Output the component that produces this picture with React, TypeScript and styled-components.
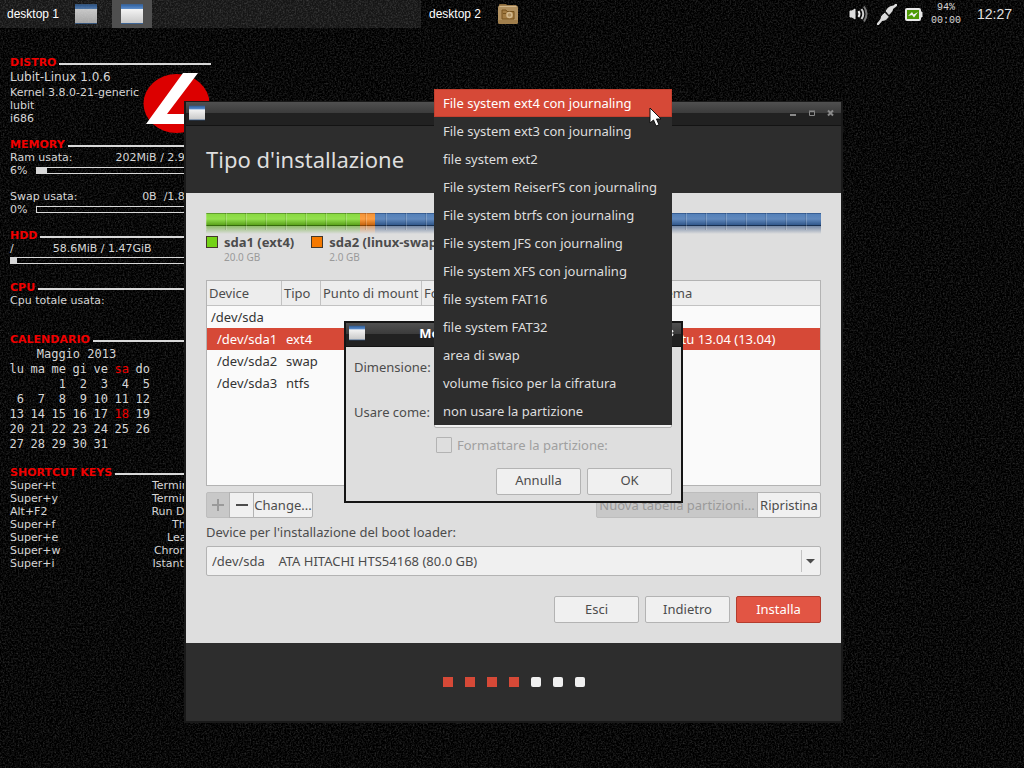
import React from "react";
import styled, { createGlobalStyle, css } from "styled-components";

const ui = `"Noto Sans", "Open Sans", sans-serif`;
const conky = `"DejaVu Sans", sans-serif`;

const GlobalStyle = createGlobalStyle`
  *, *::before, *::after { box-sizing: border-box; }
  body { margin: 0; background: #050505; overflow: hidden; }
  button, input, select { font: inherit; margin: 0; }
`;

/* ---------- desktop ---------- */

const Desktop = styled.main`
  position: relative;
  min-height: 100vh;
  overflow: hidden;
  font: 13px/18px ${ui};
  color: #4c4c4c;
`;

const NoiseLayer = styled.svg`
  position: absolute;
  inset: 0;
  width: 100%;
  height: 100%;
`;

/* ---------- top panel ---------- */

const Panel = styled.header`
  position: relative;
  display: flex;
  height: 28px;
  font: 12px/28px "Liberation Sans", sans-serif;
  color: #fff;
`;

const Pager = styled.nav<{ $current?: boolean }>`
  display: flex;
  flex: 0 1 421px;
  padding-left: ${(p) => (p.$current ? 7 : 8)}px;
  background: ${(p) => (p.$current ? "rgba(255, 255, 255, 0.085)" : "none")};
`;

const PagerName = styled.span`
  flex: none;
  width: 59px;
`;

const TaskButton = styled.button<{ $active?: boolean }>`
  display: grid;
  place-items: center;
  width: 40px;
  height: 28px;
  margin-right: 6px;
  padding: 0;
  border: 0;
  background: ${(p) => (p.$active ? "#4f4f4f" : "none")};
`;

const Tray = styled.div`
  display: flex;
  align-items: center;
  gap: 8px;
  margin-left: auto;
  padding-right: 12px;
`;

const BatteryText = styled.div`
  font: 10px/13px "Liberation Mono", monospace;
  color: #d8d8d8;
  text-align: center;
`;

const Clock = styled.time`
  margin-left: 8px;
  font-size: 14px;
  color: #e2e2e2;
`;

/* ---------- system monitor ---------- */

const Monitor = styled.aside`
  position: relative;
  display: flex;
  flex-direction: column;
  width: 201px;
  margin: 28px 0 0 10px;
  font: 11px/13px ${conky};
  color: #d6d6d6;
`;

const MonitorSection = styled.section<{ $after?: number }>`
  position: relative;
  margin-bottom: ${(p) => p.$after ?? 13}px;
`;

const MonitorTitle = styled.h2`
  display: flex;
  align-items: center;
  gap: 3px;
  margin: 0;
  font: bold 11px/13px ${conky};
  color: #f00000;
  white-space: nowrap;

  &::after {
    content: "";
    flex: 1;
    height: 2px;
    margin-top: 2px;
    background: #d8d8d8;
  }
`;

const MonitorLine = styled.div<{ $large?: boolean }>`
  display: flex;
  justify-content: space-between;
  min-height: 13px;
  white-space: pre;
  ${(p) =>
    p.$large &&
    css`
      font-size: 12px;
      line-height: 17px;
    `}
`;

const Meter = styled.div<{ $wide?: boolean }>`
  width: ${(p) => (p.$wide ? "100%" : "175px")};
  height: 7px;
  margin-top: ${(p) => (p.$wide ? 2 : 3)}px;
  border: 1px solid #d8d8d8;
`;

const MeterFill = styled.div`
  height: 100%;
  background: #d8d8d8;
`;

const HddUsage = styled.span`
  flex: 1;
  padding-left: 39px;
`;

const Logo = styled.svg`
  position: absolute;
  left: 133px;
  top: 17px;
  width: 67px;
  height: 60px;
`;

const Calendar = styled.table`
  margin-top: 1px;
  border-collapse: collapse;
  font: 12px/15px "DejaVu Sans Mono", monospace;

  caption {
    width: 133px;
    height: 15px;
    text-align: center;
  }
  th,
  td {
    width: 21px;
    height: 15px;
    padding: 0 7px 0 0;
    font-weight: normal;
  }
`;

const CalendarCell = styled.span<{ $today?: boolean }>`
  display: flex;
  justify-content: flex-end;
  width: 14px;
  color: ${(p) => (p.$today ? "#f00000" : "inherit")};
`;

/* ---------- windows ---------- */

const InstallerWindow = styled.section`
  position: absolute;
  left: 184px;
  right: 181px;
  top: 101px;
  border: 2px solid #191919;
  border-top-width: 1px;
  background: #dedede;
`;

const TitleBar = styled.div`
  display: flex;
  align-items: center;
  height: 24px;
  padding: 0 5px 2px 3px;
  border-bottom: 1px solid #131313;
  background: linear-gradient(#505050, #3b3b3b 11px, #212121 11px, #212121);
`;

const DialogTitle = styled.h2`
  flex: 1;
  margin: 0;
  font: bold 13px/20px ${ui};
  color: #fff;
  text-align: center;
`;

const WindowControls = styled.div<{ $bright?: boolean }>`
  display: flex;
  gap: 8px;
  margin-left: auto;
  color: ${(p) => (p.$bright ? "#f4f4f4" : "#8a8a8a")};
`;

const WindowControl = styled.button`
  display: grid;
  width: 11px;
  height: 10px;
  padding: 0;
  border: 0;
  background: none;
  color: inherit;
`;

const WindowHeader = styled.header`
  display: flex;
  align-items: center;
  height: 67px;
  padding: 0 20px 2px;
  background: #2d2d2d;
`;

const WindowTitle = styled.h1`
  margin: 0;
  font: 22px/32px ${ui};
  color: #dedede;
`;

const WindowBody = styled.div`
  padding: 20px;
`;

const WindowFooter = styled.footer`
  display: flex;
  align-items: center;
  justify-content: center;
  gap: 12px;
  height: 78px;
  background: #2d2d2d;
`;

const StepDot = styled.span<{ $done?: boolean }>`
  width: 10px;
  height: 10px;
  border-radius: ${(p) => (p.$done ? 0 : 2)}px;
  background: ${(p) => (p.$done ? "#d64937" : "#f0f0f0")};
`;

/* ---------- partition chart ---------- */

const DiskBar = styled.div`
  display: flex;
  height: 23px;
  position: relative;

  &::after {
    content: "";
    position: absolute;
    inset: 0;
    background: linear-gradient(
        90deg,
        rgba(255, 255, 255, 0.2) 0 1px,
        transparent 1px 19px,
        rgba(0, 0, 0, 0.1) 19px 20px
      )
      0 0 / 20px 17px repeat-x;
  }
`;

type Hue = "green" | "orange" | "blue";

const barFill: Record<Hue, string> = {
  green:
    "linear-gradient(#5f9e2c 0 1px, #89d941 1px, #93e04e 6px, #5ba31b 12px, #356b0b 12px 13px, rgba(100,170,45,.65) 13px, rgba(222,222,222,0) 21px)",
  orange:
    "linear-gradient(#c4712a 0 1px, #f59436 1px, #fd9e42 6px, #c8640f 12px, #874407 12px 13px, rgba(215,125,50,.65) 13px, rgba(222,222,222,0) 21px)",
  blue:
    "linear-gradient(#385f94 0 1px, #5480b8 1px, #6189bd 6px, #31588c 12px, #172f50 12px 13px, rgba(60,90,135,.65) 13px, rgba(222,222,222,0) 21px)",
};

const swatchFill: Record<Hue, string> = {
  green: "#73d216",
  orange: "#f57900",
  blue: "#3465a4",
};

const BarSegment = styled.div<{ $hue: Hue; $share: number }>`
  flex: ${(p) => p.$share} 1 0;
  background: ${(p) => barFill[p.$hue]};
`;

const Legend = styled.ul`
  display: flex;
  gap: 17px;
  height: 44px;
  margin: 0;
  padding: 0;
  list-style: none;
`;

const LegendItem = styled.li`
  display: grid;
  grid-template-columns: 12px auto;
  grid-template-rows: 15px 12px;
  column-gap: 6px;
  align-content: start;
  white-space: nowrap;
`;

const Swatch = styled.span<{ $hue: Hue }>`
  width: 12px;
  height: 12px;
  border: 1px solid #43382b;
  background: ${(p) => swatchFill[p.$hue]};
`;

const LegendName = styled.strong`
  font-size: 13px;
  line-height: 13px;
`;

const LegendSize = styled.span`
  grid-column: 2;
  font-size: 10px;
  line-height: 12px;
  color: #9a9a9a;
`;

/* ---------- partition table ---------- */

const TableFrame = styled.div`
  height: 206px;
  overflow: hidden;
  border: 1px solid #b3b3b3;
  background: #fafafa;
`;

const PartitionTable = styled.table`
  width: 100%;
  table-layout: fixed;
  border-collapse: separate;
  border-spacing: 0;
  white-space: nowrap;
`;

const HeadCell = styled.th<{ $width?: number }>`
  width: ${(p) => (p.$width ? `${p.$width}px` : "auto")};
  height: 25px;
  padding: 0 0 0 2px;
  overflow: hidden;
  border-right: 1px solid #c2c2c2;
  border-bottom: 1px solid #c2c2c2;
  background: #ededed;
  font-weight: normal;
  text-align: left;

  &:last-child {
    border-right: 0;
  }
`;

const BodyRow = styled.tr<{ $selected?: boolean }>`
  color: ${(p) => (p.$selected ? "#fff" : "#333")};
  background: ${(p) => (p.$selected ? "#d64937" : "transparent")};
`;

const BodyCell = styled.td<{ $indent?: number }>`
  height: 22px;
  padding: 0 0 0 ${(p) => p.$indent ?? 4}px;
  line-height: 20px;
`;

/* ---------- controls ---------- */

const Button = styled.button<{ $primary?: boolean }>`
  width: 85px;
  height: 27px;
  padding: 0 0 2px;
  border: 1px solid ${(p) => (p.$primary ? "#b43c2d" : "#b3b3b3")};
  border-radius: 2px;
  background: ${(p) => (p.$primary ? "#e25544" : "#f0f0f0")};
  color: ${(p) => (p.$primary ? "#fff" : "#4c4c4c")};
`;

const Toolbar = styled.div`
  display: flex;
  justify-content: space-between;
  margin-top: 6px;
`;

const ButtonGroup = styled.div`
  display: flex;
`;

const ToolButton = styled.button<{ $width: number }>`
  display: grid;
  place-content: center;
  width: ${(p) => p.$width}px;
  height: 26px;
  margin-left: -1px;
  padding: 0;
  overflow: hidden;
  border: 1px solid #b3b3b3;
  background: #f0f0f0;
  color: #4c4c4c;
  font-size: 13px;
  white-space: nowrap;

  &:first-child {
    margin-left: 0;
    border-radius: 2px 0 0 2px;
  }
  &:last-child {
    border-radius: 0 2px 2px 0;
  }
  &:disabled {
    border-color: #bdbdbd;
    background: #c8c8c8;
    color: #9a9a9a;
  }
`;

const BootLabel = styled.label`
  display: block;
  margin: 5px 0;
`;

const SelectBox = styled.div`
  position: relative;
  display: flex;

  select {
    flex: 1;
    width: 100%;
    height: 30px;
    padding: 0 30px 0 5px;
    border: 1px solid #b3b3b3;
    border-radius: 2px;
    appearance: none;
    background: #f0f0f0;
    color: #4c4c4c;
  }
`;

const SelectArrow = styled.svg`
  position: absolute;
  right: 0;
  top: 4px;
  width: 20px;
  height: 22px;
  pointer-events: none;
`;

const Actions = styled.div`
  display: flex;
  justify-content: flex-end;
  gap: 6px;
`;

const BodyActions = styled(Actions)`
  margin-top: 20px;
`;

/* ---------- dialog ---------- */

const DialogLayer = styled.div`
  position: absolute;
  inset: 0;
  display: grid;
  place-items: center;
`;

const Dialog = styled.section`
  width: 339px;
  border: 2px solid #151515;
  background: #dedede;
`;

const DialogForm = styled.form`
  display: grid;
  grid-template-columns: 74px 1fr;
  gap: 15px 6px;
  padding: 6px 9px 6px 8px;
`;

const FieldLabel = styled.label`
  align-self: center;
  padding-bottom: 2px;
  text-align: right;
  white-space: nowrap;
`;

const SizeInput = styled.input`
  width: 100%;
  height: 30px;
  padding: 0 6px;
  border: 1px solid #b3b3b3;
  border-radius: 2px;
  background: #fafafa;
  color: #4c4c4c;
`;

const FormatRow = styled.label`
  grid-column: 2;
  display: flex;
  align-items: center;
  gap: 5px;
  height: 18px;
  margin-top: -7px;
  padding-left: 2px;
  color: #a0a0a0;

  input {
    width: 16px;
    height: 16px;
    border: 1px solid #b3b3b3;
    border-radius: 1px;
    appearance: none;
    background: #dedede;
  }
`;

const DialogActions = styled(Actions)`
  grid-column: 1 / -1;
  margin-top: -1px;
`;

const Menu = styled.div`
  position: absolute;
  left: 0;
  right: 0;
  bottom: 3px;
  display: flex;
  flex-direction: column;
  background: #2d2d2d;
`;

const MenuItem = styled.button<{ $active?: boolean }>`
  height: 28px;
  padding: 0 9px;
  border: ${(p) => (p.$active ? "1px solid #c43f2e" : "0")};
  padding-left: ${(p) => (p.$active ? 8 : 9)}px;
  background: ${(p) => (p.$active ? "#d64937" : "transparent")};
  color: ${(p) => (p.$active ? "#fff" : "#dedede")};
  text-align: left;
  white-space: nowrap;
`;

const Pointer = styled.svg`
  position: absolute;
  right: 10px;
  top: 18px;
  width: 13px;
  height: 20px;
`;

/* ---------- drawings ---------- */

function WindowIcon({ size = 22, dim = false, uid }: { size?: number; dim?: boolean; uid: string }) {
  return (
    <svg width={size} height={size} viewBox="0 0 22 22" aria-hidden="true" opacity={dim ? 0.8 : 1}>
      <defs>
        <linearGradient id={`${uid}-a`} x1="0" y1="0" x2="0" y2="1">
          <stop offset="0" stopColor="#3465a4" />
          <stop offset="1" stopColor="#6b9bd6" />
        </linearGradient>
        <linearGradient id={`${uid}-b`} x1="0" y1="0" x2="0" y2="1">
          <stop offset="0" stopColor="#f4f4f4" />
          <stop offset="1" stopColor="#c8c8c8" />
        </linearGradient>
      </defs>
      <rect x="0" y="1" width="22" height="20" fill="#3d6494" />
      <rect x="0" y="2" width="22" height="5" fill={`url(#${uid}-a)`} />
      <rect x="0" y="6" width="22" height="14" fill={`url(#${uid}-b)`} />
    </svg>
  );
}

function FolderIcon() {
  return (
    <svg width="22" height="22" viewBox="0 0 22 22" aria-hidden="true">
      <path d="M2 5V2q0-1 1-1h6l1 1h9l1 3z" fill="#8a6a3c" />
      <rect x="1" y="2.500" width="20" height="18.500" rx="2" fill="#b1905f" />
      <path d="M2.500 3.500h17" stroke="#d0b68c" />
      <path d="M1 17v2q0 2 2 2h16q2 0 2-2v-2z" fill="#a07e4c" />
      <path d="M5 7h4l1 1.500h7V16H5z" fill="#a27b42" stroke="#76531f" />
      <circle cx="12.500" cy="12" r="2.500" fill="#b1905f" stroke="#d3b98d" strokeWidth="1.500" />
      <path d="M6 10.500h3" stroke="#76531f" />
    </svg>
  );
}

function Grain() {
  return (
    <NoiseLayer aria-hidden="true">
      <filter id="grain" x="0" y="0" width="100%" height="100%" colorInterpolationFilters="sRGB">
        <feTurbulence type="fractalNoise" baseFrequency="0.6" numOctaves="3" seed="4" />
        <feColorMatrix values="0.32 0 0 0 -0.125  0.32 0 0 0 -0.125  0.32 0 0 0 -0.125  0 0 0 0 1" />
      </filter>
      <rect width="100%" height="100%" filter="url(#grain)" />
    </NoiseLayer>
  );
}

function Controls({ bright = false }: { bright?: boolean }) {
  return (
    <WindowControls $bright={bright}>
      <WindowControl aria-label="Riduci">
        <svg width="11" height="10" fill="none" stroke="currentColor" strokeWidth="2">
          <path d="M3 7h6" />
        </svg>
      </WindowControl>
      <WindowControl aria-label="Ingrandisci">
        <svg width="11" height="10" fill="none" stroke="currentColor">
          <path d="M3.500 3.500h5v4h-5zM3 3h6" />
        </svg>
      </WindowControl>
      <WindowControl aria-label="Chiudi">
        <svg width="11" height="10" fill="none" stroke="currentColor" strokeWidth="2">
          <path d="M3 2.500l5 5M8 2.500l-5 5" />
        </svg>
      </WindowControl>
    </WindowControls>
  );
}

/* ---------- data ---------- */

const weekdays = ["lu", "ma", "me", "gi", "ve", "sa", "do"];
const weeks = [
  ["", "", "1", "2", "3", "4", "5"],
  ["6", "7", "8", "9", "10", "11", "12"],
  ["13", "14", "15", "16", "17", "18", "19"],
  ["20", "21", "22", "23", "24", "25", "26"],
  ["27", "28", "29", "30", "31", "", ""],
];

const shortcuts = [
  ["Super+t", "Terminator"],
  ["Super+y", "Terminator"],
  ["Alt+F2", "Run Dialog"],
  ["Super+f", "Thunar"],
  ["Super+e", "Leafpad"],
  ["Super+w", "Chromium"],
  ["Super+i", "Istantanea"],
];

const fileSystems = [
  "File system ext4 con journaling",
  "File system ext3 con journaling",
  "file system ext2",
  "File system ReiserFS con journaling",
  "File system btrfs con journaling",
  "File system JFS con journaling",
  "File system XFS con journaling",
  "file system FAT16",
  "file system FAT32",
  "area di swap",
  "volume fisico per la cifratura",
  "non usare la partizione",
];

const partitions: { device: string; type: string; system?: string; selected?: boolean }[] = [
  { device: "/dev/sda1", type: "ext4", system: "Ubuntu 13.04 (13.04)", selected: true },
  { device: "/dev/sda2", type: "swap" },
  { device: "/dev/sda3", type: "ntfs" },
];

const volumes: { name: string; size?: string; hue: Hue; share: number }[] = [
  { name: "sda1 (ext4)", size: "20.0 GB", hue: "green", share: 154 },
  { name: "sda2 (linux-swap)", size: "2.0 GB", hue: "orange", share: 15 },
  { name: "sda3", hue: "blue", share: 446 },
];

/* ---------- parts ---------- */

function TopPanel() {
  return (
    <Panel>
      <Pager $current aria-label="desktop 1">
        <PagerName>desktop 1</PagerName>
        <TaskButton aria-label="Finestra 1">
          <WindowIcon dim uid="task1" />
        </TaskButton>
        <TaskButton $active aria-label="Finestra 2">
          <WindowIcon uid="task2" />
        </TaskButton>
      </Pager>
      <Pager aria-label="desktop 2">
        <PagerName>desktop 2</PagerName>
        <TaskButton aria-label="Cartella">
          <FolderIcon />
        </TaskButton>
      </Pager>
      <Tray>
        <svg width="20" height="18" viewBox="0 0 20 18" aria-label="Volume" fill="none">
          <path d="M1 6h2l3-2v10l-3-2H1z" fill="#dcdcdc" stroke="#dcdcdc" strokeLinejoin="round" />
          <path d="M9.500 6q2 3 0 6" stroke="#f0f0f0" strokeWidth="2" />
          <path d="M12.500 4q3.500 5 0 10" stroke="#d0d0d0" strokeWidth="2" />
          <path d="M15 1.500q5 7.500 0 15" stroke="#777" strokeWidth="2" />
        </svg>
        <svg width="20" height="22" viewBox="0 0 20 22" aria-label="Rete" stroke="#dcdcdc" fill="#dcdcdc">
          <path d="M1 21l5-6M14 6l5-4" strokeWidth="2.500" strokeLinecap="round" />
          <path d="M4 17q-1-4 4-7l3.500 3.500q-3 5-7.500 3.500zM9 8q2-4.500 7-5 0 6-4 8.500z" strokeWidth="1" strokeLinejoin="round" />
          <path d="M7.500 9l5 5" stroke="#222" strokeWidth="1" />
        </svg>
        <svg width="18" height="13" viewBox="0 0 18 13" aria-label="Batteria">
          <path d="M15 4h2v5h-2z" fill="#e8e8e8" stroke="#e8e8e8" strokeLinejoin="round" />
          <rect x="1" y="1" width="14" height="11" rx="1" fill="#4e9a06" stroke="#e8e8e8" strokeWidth="2" />
          <path d="M3 8l4-4 1.500 2.500L13 4l-4 5.500L7 7z" fill="#f2f2f2" />
        </svg>
        <BatteryText>
          94%
          <br />
          00:00
        </BatteryText>
        <Clock>12:27</Clock>
      </Tray>
    </Panel>
  );
}

function SystemMonitor() {
  return (
    <Monitor>
      <MonitorSection>
        <MonitorTitle>DISTRO</MonitorTitle>
        <MonitorLine $large>Lubit-Linux 1.0.6</MonitorLine>
        <MonitorLine>Kernel 3.8.0-21-generic</MonitorLine>
        <MonitorLine>lubit</MonitorLine>
        <MonitorLine>i686</MonitorLine>
        <Logo viewBox="0 0 67 60" aria-label="Lubit">
          <ellipse cx="33.500" cy="30.500" rx="33" ry="29.500" fill="#dc0000" />
          <path d="M40 0h15L24 41h32v10H3z" fill="#fff" />
        </Logo>
      </MonitorSection>

      <MonitorSection>
        <MonitorTitle>MEMORY</MonitorTitle>
        <MonitorLine>
          <span>Ram usata:</span>
          <span>202MiB / 2.98GiB</span>
        </MonitorLine>
        <MonitorLine>
          6%
          <Meter>
            <MeterFill style={{ width: "6%" }} />
          </Meter>
        </MonitorLine>
        <MonitorLine />
        <MonitorLine>
          <span>Swap usata:</span>
          <span>0B  /1.86GiB</span>
        </MonitorLine>
        <MonitorLine>
          0%
          <Meter>
            <MeterFill style={{ width: "0%" }} />
          </Meter>
        </MonitorLine>
      </MonitorSection>

      <MonitorSection>
        <MonitorTitle>HDD</MonitorTitle>
        <MonitorLine>
          <span>/</span>
          <HddUsage>58.6MiB / 1.47GiB</HddUsage>
        </MonitorLine>
        <MonitorLine>
          <Meter $wide>
            <MeterFill style={{ width: "3%" }} />
          </Meter>
        </MonitorLine>
      </MonitorSection>

      <MonitorSection $after={26}>
        <MonitorTitle>CPU</MonitorTitle>
        <MonitorLine>Cpu totale usata:</MonitorLine>
      </MonitorSection>

      <MonitorSection $after={14}>
        <MonitorTitle>CALENDARIO</MonitorTitle>
        <Calendar>
          <caption>Maggio 2013</caption>
          <thead>
            <tr>
              {weekdays.map((day) => (
                <th key={day} scope="col">
                  <CalendarCell $today={day === "sa"}>{day}</CalendarCell>
                </th>
              ))}
            </tr>
          </thead>
          <tbody>
            {weeks.map((week, i) => (
              <tr key={i}>
                {week.map((day, j) => (
                  <td key={j}>
                    <CalendarCell $today={day === "18"}>{day}</CalendarCell>
                  </td>
                ))}
              </tr>
            ))}
          </tbody>
        </Calendar>
      </MonitorSection>

      <MonitorSection>
        <MonitorTitle>SHORTCUT KEYS</MonitorTitle>
        {shortcuts.map(([keys, action]) => (
          <MonitorLine key={keys}>
            <span>{keys}</span>
            <span>{action}</span>
          </MonitorLine>
        ))}
      </MonitorSection>
    </Monitor>
  );
}

function PartitionDialog() {
  return (
    <DialogLayer>
      <Dialog role="dialog" aria-labelledby="dialog-title">
        <TitleBar>
          <WindowIcon size={16} uid="dialog" />
          <DialogTitle id="dialog-title">Modifica una partizione</DialogTitle>
          <Controls bright />
        </TitleBar>
        <DialogForm onSubmit={(e) => e.preventDefault()}>
          <FieldLabel htmlFor="size">Dimensione:</FieldLabel>
          <SizeInput id="size" />
          <FieldLabel htmlFor="use-as">Usare come:</FieldLabel>
          <SelectBox>
            <select id="use-as">
              {fileSystems.map((name) => (
                <option key={name}>{name}</option>
              ))}
            </select>
            <Menu role="listbox" aria-label="Usare come">
              {fileSystems.map((name, i) => (
                <MenuItem key={name} type="button" role="option" aria-selected={i === 0} $active={i === 0}>
                  {name}
                </MenuItem>
              ))}
              <Pointer viewBox="0 0 13 20" aria-hidden="true">
                <path
                  d="M1 1v15l3.500-3 2.500 6 3-1.200-2.500-5.800H12z"
                  fill="#fff"
                  stroke="#111"
                  strokeLinejoin="round"
                />
              </Pointer>
            </Menu>
          </SelectBox>
          <FormatRow>
            <input type="checkbox" disabled />
            Formattare la partizione:
          </FormatRow>
          <DialogActions>
            <Button type="button">Annulla</Button>
            <Button type="submit">OK</Button>
          </DialogActions>
        </DialogForm>
      </Dialog>
    </DialogLayer>
  );
}

function Installer() {
  return (
    <InstallerWindow aria-labelledby="installer-title">
      <TitleBar>
        <WindowIcon size={16} uid="installer" />
        <Controls />
      </TitleBar>
      <WindowHeader>
        <WindowTitle id="installer-title">Tipo d'installazione</WindowTitle>
      </WindowHeader>
      <WindowBody>
        <DiskBar>
          {volumes.map((v) => (
            <BarSegment key={v.name} $hue={v.hue} $share={v.share} />
          ))}
        </DiskBar>
        <Legend>
          {volumes
            .filter((v) => v.size)
            .map((v) => (
              <LegendItem key={v.name}>
                <Swatch $hue={v.hue} />
                <LegendName>{v.name}</LegendName>
                <LegendSize>{v.size}</LegendSize>
              </LegendItem>
            ))}
        </Legend>
        <TableFrame>
          <PartitionTable>
            <thead>
              <tr>
                <HeadCell $width={75}>Device</HeadCell>
                <HeadCell $width={39}>Tipo</HeadCell>
                <HeadCell $width={101}>Punto di mount</HeadCell>
                <HeadCell $width={84}>Formattare?</HeadCell>
                <HeadCell $width={80}>Dimensione</HeadCell>
                <HeadCell $width={56}>Usato</HeadCell>
                <HeadCell>Sistema</HeadCell>
              </tr>
            </thead>
            <tbody>
              <BodyRow>
                <BodyCell colSpan={7}>/dev/sda</BodyCell>
              </BodyRow>
              {partitions.map((p) => (
                <BodyRow key={p.device} $selected={p.selected}>
                  <BodyCell $indent={10}>{p.device}</BodyCell>
                  <BodyCell>{p.type}</BodyCell>
                  <BodyCell colSpan={4} />
                  <BodyCell $indent={6}>{p.system}</BodyCell>
                </BodyRow>
              ))}
            </tbody>
          </PartitionTable>
        </TableFrame>
        <Toolbar>
          <ButtonGroup>
            <ToolButton $width={24} disabled aria-label="Aggiungi">
              <svg width="14" height="14" stroke="currentColor" strokeWidth="2">
                <path d="M1 7h12M7 1v12" />
              </svg>
            </ToolButton>
            <ToolButton $width={25} aria-label="Rimuovi">
              <svg width="14" height="14" stroke="currentColor" strokeWidth="2">
                <path d="M1 7h12" />
              </svg>
            </ToolButton>
            <ToolButton $width={60}>Change...</ToolButton>
          </ButtonGroup>
          <ButtonGroup>
            <ToolButton $width={162} disabled>
              Nuova tabella partizioni...
            </ToolButton>
            <ToolButton $width={64}>Ripristina</ToolButton>
          </ButtonGroup>
        </Toolbar>
        <BootLabel htmlFor="boot">Device per l'installazione del boot loader:</BootLabel>
        <SelectBox>
          <select id="boot">
            <option>{"/dev/sda\u00a0\u00a0\u00a0\u00a0ATA HITACHI HTS54168 (80.0 GB)"}</option>
          </select>
          <SelectArrow viewBox="0 0 20 22" aria-hidden="true">
            <path d="M0.500 0v22" stroke="#c2c2c2" />
            <path d="M5 9h9l-4.500 4.500z" fill="#4c4c4c" />
          </SelectArrow>
        </SelectBox>
        <BodyActions>
          <Button>Esci</Button>
          <Button>Indietro</Button>
          <Button $primary>Installa</Button>
        </BodyActions>
      </WindowBody>
      <WindowFooter>
        {[1, 2, 3, 4, 5, 6, 7].map((step) => (
          <StepDot key={step} $done={step <= 4} />
        ))}
      </WindowFooter>
      <PartitionDialog />
    </InstallerWindow>
  );
}

export default function App() {
  return (
    <Desktop>
      <GlobalStyle />
      <Grain />
      <TopPanel />
      <SystemMonitor />
      <Installer />
    </Desktop>
  );
}
